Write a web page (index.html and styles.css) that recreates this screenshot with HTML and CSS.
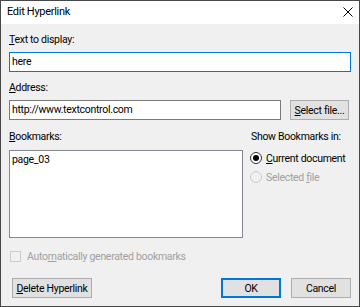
FILE: index.html
```html
<!DOCTYPE html>
<html lang="en">
<head>
    <meta charset="UTF-8">
    <meta name="viewport" content="width=device-width, initial-scale=1.0">
    <link rel="stylesheet" href="styles.css">
</head>
<body>
    <div class="window">
        <div class="titlebar">
            <span class="title">Edit Hyperlink</span>
            <svg class="close" width="10" height="10" viewBox="0 0 10 10">
                <path d="M0.5 0.5 L9.5 9.5 M9.5 0.5 L0.5 9.5" stroke="#000" stroke-width="1" fill="none"/>
            </svg>
        </div>
        <div class="content">
            <label class="field-label label-first"><u>T</u>ext to display:</label>
            <div class="textbox focused">here</div>

            <label class="field-label label-next"><u>A</u>ddress:</label>
            <div class="address-row">
                <div class="textbox address">http://www.textcontrol.com</div>
                <button class="btn select-btn"><u>S</u>elect file...</button>
            </div>

            <div class="bookmark-labels">
                <label class="field-label list-label"><u>B</u>ookmarks:</label>
                <label class="field-label">Show Bookmarks in:</label>
            </div>
            <div class="bookmark-row">
                <div class="listbox">
                    <div class="list-item">page_03</div>
                </div>
                <div class="radios">
                    <div class="radio-row">
                        <span class="radio checked"></span>
                        <span><u>C</u>urrent document</span>
                    </div>
                    <div class="radio-row disabled">
                        <span class="radio"></span>
                        <span>Selected <u>f</u>ile</span>
                    </div>
                </div>
            </div>

            <div class="check-row">
                <span class="checkbox"></span>
                <span>Auto<u>m</u>atically generated bookmarks</span>
            </div>

            <div class="button-row">
                <button class="btn delete-btn"><u>D</u>elete Hyperlink</button>
                <div class="right-buttons">
                    <button class="btn default-btn">OK</button>
                    <button class="btn">Cancel</button>
                </div>
            </div>
        </div>
    </div>
</body>
</html>
```

FILE: styles.css
```css
body {
    margin: 0;
    font-family: Roboto, "Liberation Sans", sans-serif;
    font-size: 10.5px;
    letter-spacing: -0.3px;
    color: #000;
    background: #fff;
    white-space: nowrap;
}
.window {
    width: 360px;
    height: 307px;
    box-sizing: border-box;
    border: 1px solid #484848;
    background: #f0f0f0;
}
.titlebar {
    height: 23px;
    background: #fff;
    display: flex;
    align-items: center;
    justify-content: space-between;
    padding: 0 6px 0 6px;
}
.title {
    font-size: 11px;
    margin-top: -2px;
}
.close {
    margin-top: -2px;
}
.content {
    padding: 0 8px;
}
u {
    text-decoration: underline;
    text-underline-offset: 1px;
}
.field-label {
    display: block;
    line-height: 14px;
    height: 14px;
}
.label-first {
    margin-top: 9px;
    margin-bottom: 5px;
}
.label-next {
    margin-top: 9px;
    margin-bottom: 5px;
}
.textbox {
    height: 20px;
    box-sizing: border-box;
    border: 1px solid #7a7a7a;
    background: #fff;
    line-height: 18px;
    padding-left: 2px;
}
.textbox.focused {
    border-color: #0078d7;
}
.address-row {
    display: flex;
    align-items: center;
    gap: 9px;
}
.address {
    width: 272px;
}
.btn {
    font-family: inherit;
    font-size: inherit;
    letter-spacing: inherit;
    height: 20px;
    width: 60px;
    padding: 0;
    box-sizing: border-box;
    background: #e1e1e1;
    border: 1px solid #adadad;
    color: #000;
    white-space: nowrap;
}
.select-btn {
    width: 59px;
}
.bookmark-labels {
    display: flex;
    margin-top: 10px;
    margin-bottom: 6px;
}
.list-label {
    width: 242px;
}
.bookmark-row {
    display: flex;
    gap: 8px;
}
.listbox {
    flex: none;
    width: 234px;
    height: 88px;
    box-sizing: border-box;
    border: 1px solid #828790;
    background: #fff;
}
.list-item {
    padding: 2px 2px;
    line-height: 14px;
}
.radios {
    flex: 1;
    display: flex;
    flex-direction: column;
    gap: 3px;
}
.radio-row {
    display: flex;
    align-items: center;
    gap: 4px;
    height: 16px;
}
.radio {
    flex: none;
    width: 12px;
    height: 12px;
    box-sizing: border-box;
    border: 1px solid #333;
    border-radius: 50%;
    background: #fff;
    display: flex;
    align-items: center;
    justify-content: center;
    margin-left: -1px;
}
.radio.checked::after {
    content: "";
    width: 6px;
    height: 6px;
    border-radius: 50%;
    background: #000;
}
.disabled {
    color: #a0a0a0;
}
.disabled .radio {
    border-color: #cccccc;
    background: #f0f0f0;
}
.check-row {
    display: flex;
    align-items: center;
    gap: 6px;
    height: 20px;
    margin-top: 8px;
    color: #a0a0a0;
    padding-left: 1px;
}
.checkbox {
    flex: none;
    width: 11px;
    height: 11px;
    box-sizing: border-box;
    border: 1px solid #cccccc;
    background: #f0f0f0;
}
.button-row {
    display: flex;
    justify-content: space-between;
    margin-top: 12px;
}
.delete-btn {
    width: 80px;
    margin-left: 3px;
}
.right-buttons {
    display: flex;
    gap: 10px;
}
.default-btn {
    border: 2px solid #0078d7;
}
```
